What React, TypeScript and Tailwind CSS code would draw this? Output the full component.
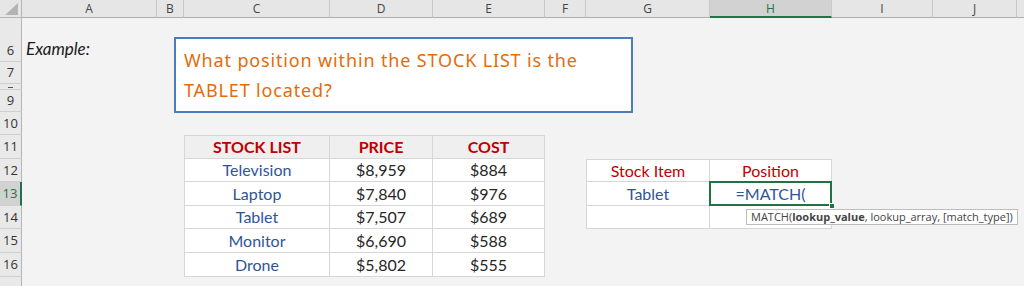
import React from "react";

type Col = { key: string; w: string };

const COLS: Col[] = [
  { key: "A", w: "w-[135px]" },
  { key: "B", w: "w-[27px]" },
  { key: "C", w: "w-[146px]" },
  { key: "D", w: "w-[103px]" },
  { key: "E", w: "w-[112px]" },
  { key: "F", w: "w-[41px]" },
  { key: "G", w: "w-[124px]" },
  { key: "H", w: "w-[122px]" },
  { key: "I", w: "w-[101px]" },
  { key: "J", w: "w-[84px]" },
  { key: "K", w: "w-[60px]" },
];

const sheetFont = { fontFamily: "Lato, 'Noto Sans', sans-serif" };

const TB = "bg-white border-r border-b border-[#d6d6d6]";
const blue = "text-[#2f5597]";
const dark = "text-[#262626]";

type CellMap = Record<string, React.ReactNode>;
type CellClass = Record<string, string>;

type RowDef = { n: string; h: string; cells?: CellMap; cls?: CellClass; active?: boolean; labelEnd?: boolean };

const data: [string, string, string][] = [
  ["Television", "$8,959", "$884"],
  ["Laptop", "$7,840", "$976"],
  ["Tablet", "$7,507", "$689"],
  ["Monitor", "$6,690", "$588"],
  ["Drone", "$5,802", "$555"],
];

function buildRows(): RowDef[] {
  const rows: RowDef[] = [
    {
      n: "6",
      h: "h-[44px]",
      labelEnd: true,
      cells: {
        A: <span className="italic text-[17px] leading-none text-[#1a1a1a] pl-[4px] pb-[5px]">Example:</span>,
      },
      cls: { A: "items-end justify-start" },
    },
    { n: "7", h: "h-[22px]" },
    { n: "", h: "h-[6px]" },
    { n: "9", h: "h-[22px]" },
    { n: "10", h: "h-[23px]" },
    {
      n: "11",
      h: "h-[24px]",
      cells: {
        C: <span className="font-bold text-[#c00000]">STOCK LIST</span>,
        D: <span className="font-bold text-[#c00000]">PRICE</span>,
        E: <span className="font-bold text-[#c00000]">COST</span>,
      },
      cls: {
        C: "bg-[#efefef] border-l border-t border-r border-b border-[#d6d6d6] justify-center",
        D: "bg-[#efefef] border-t border-r border-b border-[#d6d6d6] justify-center",
        E: "bg-[#efefef] border-t border-r border-b border-[#d6d6d6] justify-center",
      },
    },
  ];
  const heights = ["h-[23px]", "h-[24px]", "h-[23px]", "h-[24px]", "h-[24px]"];
  data.forEach((d, i) => {
    const n = String(12 + i);
    const row: RowDef = {
      n,
      h: heights[i],
      active: n === "13",
      cells: {
        C: <span className={blue}>{d[0]}</span>,
        D: <span className={dark}>{d[1]}</span>,
        E: <span className={dark}>{d[2]}</span>,
      },
      cls: {
        C: `${TB} border-l justify-center`,
        D: `${TB} justify-center`,
        E: `${TB} justify-center`,
      },
    };
    if (n === "12") {
      row.cells!.G = <span className="text-[#c00000]">Stock Item</span>;
      row.cells!.H = <span className="text-[#c00000]">Position</span>;
      row.cls!.G = "bg-white border-l border-t border-r border-b border-[#d6d6d6] justify-center";
      row.cls!.H = "bg-white border-t border-r border-b border-[#d6d6d6] justify-center";
    }
    if (n === "13") {
      row.cells!.G = <span className={blue}>Tablet</span>;
      row.cells!.H = (
        <div className="relative w-full h-full flex items-center justify-center">
          <span className={blue}>=MATCH(</span>
          <div className="absolute -left-[1px] -top-[1px] right-[-1px] bottom-[-1px] border-2 border-[#217346]" />
          <div className="absolute right-[-4px] bottom-[-4px] w-[6px] h-[6px] bg-[#217346] border border-white" />
        </div>
      );
      row.cls!.G = `${TB} border-l justify-center`;
      row.cls!.H = `${TB} justify-center relative z-10`;
    }
    if (n === "14") {
      row.cells!.G = <span />;
      row.cells!.H = <span />;
      row.cls!.G = `${TB} border-l`;
      row.cls!.H = `${TB}`;
    }
    rows.push(row);
  });
  rows.push({ n: "", h: "h-[24px]" });
  return rows;
}

function ColumnHeader() {
  return (
    <div className="flex h-[18px] shrink-0" style={{ fontFamily: "'Open Sans', 'Noto Sans', sans-serif" }}>
      <div className="w-[22px] shrink-0 h-full bg-[#e6e6e6] border-r border-b border-[#b5b5b5] relative overflow-hidden">
        <svg className="absolute right-[3px] bottom-[2px]" width="13" height="12" viewBox="0 0 13 12">
          <polygon points="13,0 13,12 0,12" fill="#b4b4b4" />
        </svg>
      </div>
      {COLS.map((c) => (
        <div
          key={c.key}
          className={`${c.w} shrink-0 h-full flex items-center justify-center text-[12px] border-r border-[#c8c8c8] ${
            c.key === "H"
              ? "bg-[#d2d2d2] text-[#217346] border-b-2 border-b-[#217346]"
              : "bg-[#e6e6e6] text-[#444] border-b border-b-[#aeaeae]"
          }`}
        >
          <span className="leading-none pt-[1px]">{c.key === "K" ? "" : c.key}</span>
        </div>
      ))}
    </div>
  );
}

function SheetRow({ r }: { r: RowDef }) {
  return (
    <div className={`flex ${r.h} shrink-0`}>
      <div
        className={`w-[22px] shrink-0 h-full flex justify-center overflow-hidden text-[13px] border-b border-[#cfcfcf] ${
          r.labelEnd ? "items-end pb-[4px]" : "items-center"
        } ${
          r.active
            ? "bg-[#d2d2d2] text-[#217346] border-r-2 border-r-[#217346]"
            : "bg-[#e9e9e9] text-[#333] border-r border-r-[#b5b5b5]"
        }`}
        style={{ fontFamily: "'Open Sans', 'Noto Sans', sans-serif" }}
      >
        {r.n ? (
          <span className="leading-none">{r.n}</span>
        ) : r.h === "h-[6px]" ? (
          <div className="w-[5px] h-[1px] bg-[#555] mt-[1px]" />
        ) : null}
      </div>
      {COLS.map((c) => {
        const content = r.cells?.[c.key];
        const cls = r.cls?.[c.key] ?? "";
        return (
          <div key={c.key} className={`${c.w} shrink-0 h-full flex items-center text-[16px] whitespace-nowrap ${cls}`}>
            {content}
          </div>
        );
      })}
    </div>
  );
}

export default function App() {
  const rows = buildRows();
  return (
    <div className="relative w-[1024px] h-[286px] overflow-hidden bg-[#f3f3f3]" style={sheetFont}>
      <ColumnHeader />
      {rows.map((r, i) => (
        <SheetRow key={i} r={r} />
      ))}

      {/* floating text box shape */}
      <div className="absolute left-[174px] top-[37px] w-[459px] h-[76px] bg-white border-2 border-[#4a7ebb] pl-[8px] pt-[6px]">
        <p
          className="text-[#e36c0a] text-[18px] leading-[30px] tracking-[0.85px]"
          style={{ fontFamily: "'Comic Sans MS', 'Noto Sans', sans-serif" }}
        >
          What position within the STOCK LIST is the
          <br />
          TABLET located?
        </p>
      </div>

      {/* function tooltip */}
      <div
        className="absolute left-[746px] top-[209px] h-[16px] px-[4px] bg-white border border-[#bdbdbd] text-[#444] text-[11px] leading-[14px] whitespace-nowrap z-20"
        style={{ fontFamily: "'Open Sans', 'Noto Sans', sans-serif" }}
      >
        MATCH(<span className="font-bold">lookup_value</span>, lookup_array, [match_type])
      </div>
    </div>
  );
}
